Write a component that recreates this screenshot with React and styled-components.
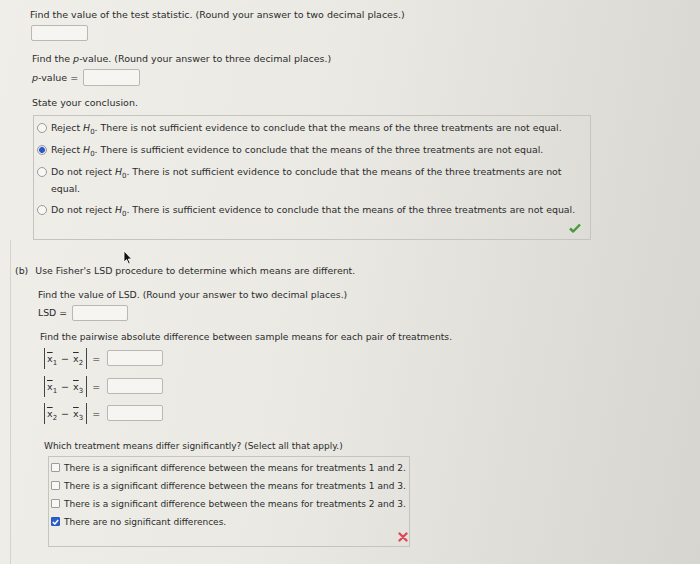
import React from "react";
import styled, { createGlobalStyle } from "styled-components";

const Global = createGlobalStyle`
  html, body { margin: 0; padding: 0; }
  body {
    width: 700px; height: 564px; overflow: hidden;
    background: linear-gradient(100deg, #efeee9 0%, #eae9e4 45%, #dddcd7 80%, #d6d5d0 100%);
    font-family: "DejaVu Sans", Verdana, sans-serif;
    font-size: 9.5px;
    color: #2b2b2b;
  }
`;

const Page = styled.div`
  position: relative;
  width: 700px;
  height: 564px;
`;

const PartA = styled.section`
  padding: 9px 0 0 30px;
`;

const Line = styled.div`
  line-height: 12px;
  font-size: ${(p) => p.$size || 9.5}px;
  margin-left: ${(p) => p.$indent || 0}px;
  margin-top: ${(p) => p.$mt || 0}px;
  display: flex;
  align-items: center;
  gap: 5px;
  white-space: nowrap;
`;

const Input = styled.div`
  width: ${(p) => p.$w || 56}px;
  height: ${(p) => p.$h || 16}px;
  border: 1px solid #b9b8b3;
  border-radius: 2px;
  background: #f6f5f2;
  box-sizing: border-box;
  margin-top: ${(p) => p.$mt || 0}px;
  margin-left: ${(p) => p.$ml || 0}px;
`;

const Ital = styled.i`
  font-style: italic;
`;

const Sub = styled.sub`
  font-size: 7px;
  font-style: normal;
  vertical-align: -3px;
  line-height: 0;
`;

const H0 = () => (
  <Ital>
    H<Sub>0</Sub>
  </Ital>
);

const ChoiceBox = styled.div`
  position: relative;
  margin: ${(p) => p.$m};
  width: ${(p) => p.$w}px;
  height: ${(p) => p.$h}px;
  border: 1px solid #c6c4be;
  box-sizing: border-box;
  padding: ${(p) => p.$pad};
  display: flex;
  flex-direction: column;
  gap: ${(p) => p.$gap}px;
  white-space: nowrap;
  font-size: ${(p) => p.$size || 9.5}px;
`;

const Choice = styled.div`
  display: flex;
  align-items: flex-start;
  gap: ${(p) => p.$gap || 4}px;
  line-height: 18px;
`;

const RadioDot = styled.span`
  flex: none;
  width: 10px;
  height: 10px;
  margin-top: 4px;
  border-radius: 50%;
  border: 1px solid #9c9b97;
  background: ${(p) => (p.$on ? "radial-gradient(circle, #2b57c9 0 2.6px, #dfe6f6 3.2px)" : "#f7f7f5")};
  box-sizing: border-box;
`;

const Box = styled.span`
  flex: none;
  width: 9px;
  height: 9px;
  margin-top: 4px;
  border: 1px solid ${(p) => (p.$on ? "#2557c4" : "#9d9c98")};
  border-radius: 1px;
  background: ${(p) => (p.$on ? "#2b5fcc" : "#f7f7f5")};
  box-sizing: border-box;
  display: flex;
  align-items: center;
  justify-content: center;
`;

const Mark = styled.span`
  position: absolute;
  right: ${(p) => p.$r}px;
  bottom: ${(p) => p.$b}px;
  display: flex;
`;

const PartB = styled.section`
  margin-left: 10px;
  border-left: 1px solid #d4d3ce;
  padding: 25px 0 0 0;
  height: 324px;
  box-sizing: border-box;
`;

const PartHead = styled.div`
  display: flex;
  line-height: 12px;
  padding-left: 4px;
  gap: 7px;
  white-space: nowrap;
  font-size: 9.4px;
`;

const PartBody = styled.div`
  padding-left: 27px;
`;

const AbsRow = styled.div`
  display: flex;
  align-items: center;
  margin-left: ${(p) => p.$ml || 0}px;
  margin-top: ${(p) => p.$mt || 0}px;
  height: 22px;
`;

const Abs = styled.span`
  display: inline-flex;
  align-items: center;
  height: 21px;
  border-left: 1px solid #444;
  border-right: 1px solid #444;
  padding: 0 3px 0 2px;
  gap: 4px;
`;

const XBar = styled.span`
  text-decoration: overline;
  text-decoration-thickness: 1px;
`;

const Eq = styled.span`
  margin: 0 7px 0 5px;
`;

const Cursor = styled.svg`
  position: absolute;
  left: 123px;
  top: 250px;
`;

const Text = styled.span``;

const Wrap = styled.span`
  display: block;
  line-height: ${(p) => p.$lh || 18}px;
`;

const radios = [
  [false, "Reject", " There is not sufficient evidence to conclude that the means of the three treatments are not equal."],
  [true, "Reject", " There is sufficient evidence to conclude that the means of the three treatments are not equal."],
  [false, "Do not reject", " There is not sufficient evidence to conclude that the means of the three treatments are not", "equal."],
  [false, "Do not reject", " There is sufficient evidence to conclude that the means of the three treatments are not equal."],
];

const checks = [
  [false, "There is a significant difference between the means for treatments 1 and 2."],
  [false, "There is a significant difference between the means for treatments 1 and 3."],
  [false, "There is a significant difference between the means for treatments 2 and 3."],
  [true, "There are no significant differences."],
];

const X = ({ n }) => (
  <span>
    <XBar>x</XBar>
    <Sub>{n}</Sub>
  </span>
);

export default function App() {
  return (
    <Page>
      <Global />
      <PartA>
        <Line>Find the value of the test statistic. (Round your answer to two decimal places.)</Line>
        <Input $w={57} $mt={4} $ml={1} />
        <Line $indent={2} $mt={12}>
          <span>
            Find the <Ital>p</Ital>-value. (Round your answer to three decimal places.)
          </span>
        </Line>
        <Line $indent={2} $mt={4}>
          <span>
            <Ital>p</Ital>-value =
          </span>
          <Input $w={57} $h={17} />
        </Line>
        <Line $indent={2} $mt={11}>State your conclusion.</Line>
        <ChoiceBox $m="6px 0 0 3px" $w={558} $h={125} $pad="3px 3px" $gap={4} $size={9.4}>
          {radios.map(([on, a, b, c], i) => (
            <Choice key={i}>
              <RadioDot $on={on} />
              <Text>
                <Wrap>
                  {a} <H0 />.{b}
                </Wrap>
                {c && <Wrap $lh={16}>{c}</Wrap>}
              </Text>
            </Choice>
          ))}
          <Mark $r={9} $b={6}>
            <svg width="12" height="10" viewBox="0 0 12 10">
              <path d="M1 5.5 L4.2 8.5 L11 1.5" fill="none" stroke="#4a9a3c" strokeWidth="2.4" strokeLinejoin="round" />
            </svg>
          </Mark>
        </ChoiceBox>
      </PartA>
      <PartB>
        <PartHead>
          <span>(b)</span>
          <span>Use Fisher's LSD procedure to determine which means are different.</span>
        </PartHead>
        <PartBody>
          <Line $mt={12} $size={9.3}>Find the value of LSD. (Round your answer to two decimal places.)</Line>
          <Line $mt={4} $size={9.3}>
            <span>LSD =</span>
            <Input $w={56} />
          </Line>
          <Line $indent={2} $mt={10} $size={9.2}>
            Find the pairwise absolute difference between sample means for each pair of treatments.
          </Line>
          {[
            ["1", "2", 4],
            ["1", "3", 6],
            ["2", "3", 5],
          ].map(([a, b, mt], i) => (
            <AbsRow key={i} $ml={6} $mt={mt}>
              <Abs>
                <X n={a} />
                <span>−</span>
                <X n={b} />
              </Abs>
              <Eq>=</Eq>
              <Input $w={56} />
            </AbsRow>
          ))}
          <Line $indent={6} $mt={16} $size={9}>
            Which treatment means differ significantly? (Select all that apply.)
          </Line>
          <ChoiceBox $m="4px 0 0 10px" $w={362} $h={91} $pad="2px 2px" $gap={0} $size={9}>
            {checks.map(([on, t], i) => (
              <Choice key={i}>
                <Box $on={on}>
                  {on && (
                    <svg width="7" height="6" viewBox="0 0 7 6">
                      <path d="M0.8 3 L2.8 5 L6.2 1" fill="none" stroke="#fff" strokeWidth="1.5" />
                    </svg>
                  )}
                </Box>
                <Text>{t}</Text>
              </Choice>
            ))}
            <Mark $r={1} $b={4}>
              <svg width="10" height="10" viewBox="0 0 10 10">
                <path d="M1.5 1.5 L8.5 8.5 M8.5 1.5 L1.5 8.5" stroke="#e0485a" strokeWidth="2.4" strokeLinecap="round" />
              </svg>
            </Mark>
          </ChoiceBox>
        </PartBody>
      </PartB>
      <Cursor width="10" height="16" viewBox="0 0 10 16">
        <path d="M1 1 L1 12 L3.6 9.6 L5.6 14 L7.2 13.3 L5.3 9 L8.6 9 Z" fill="#111" stroke="#fff" strokeWidth="0.8" />
      </Cursor>
    </Page>
  );
}
